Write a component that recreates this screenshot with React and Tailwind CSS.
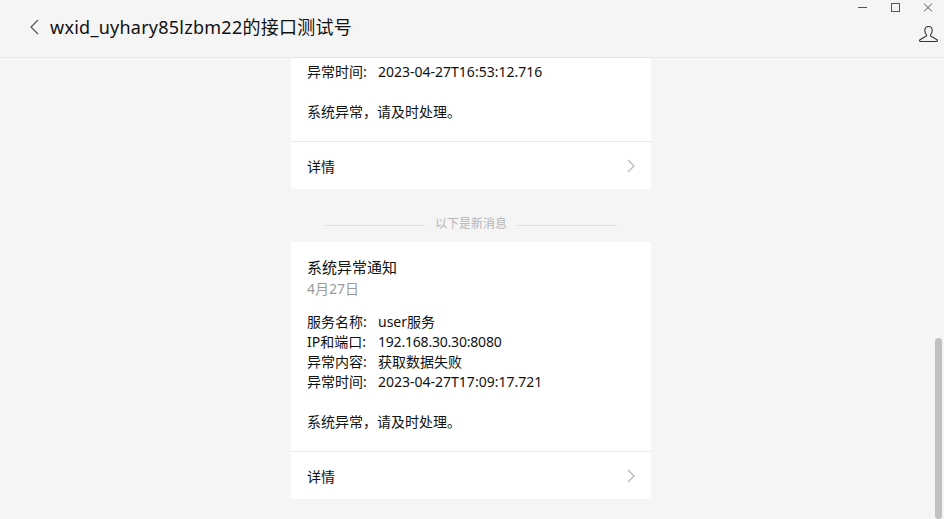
const font = { fontFamily: '"Noto Sans", "Noto Sans CJK SC", sans-serif' };

function Row({ label, value, valueClass = "" }) {
  return (
    <div className="flex h-5 items-center">
      <span className="w-[71px] shrink-0">{label}</span>
      <span className={valueClass}>{value}</span>
    </div>
  );
}

function Detail() {
  return (
    <div className="flex h-[48px] items-center justify-between border-t border-[#e7e7e7] pl-4 pr-[15px]">
      <span className="mt-[1px]">详情</span>
      <svg width="10" height="14" viewBox="0 0 10 14" fill="none" stroke="#b8b8b8" strokeWidth="1.3" className="mt-[1px]">
        <path d="M2 1l6 6-6 6" />
      </svg>
    </div>
  );
}

function Tail() {
  return (
    <>
      <div className="h-5" />
      <div className="flex h-5 items-center">系统异常，请及时处理。</div>
    </>
  );
}

export default function App() {
  return (
    <div className="relative flex h-[519px] w-[944px] flex-col overflow-hidden bg-[#f5f5f5] text-[14px] text-[#111]" style={font}>
      <header className="flex h-[58px] shrink-0 items-center border-b border-[#e7e7e7] pb-[4px] pl-[28px]">
        <svg width="12" height="16" viewBox="0 0 12 16" fill="none" stroke="#555" strokeWidth="1.2">
          <path d="M10 1L3 8l7 7" />
        </svg>
        <h1 className="ml-[10px] text-[18px] font-normal leading-6 tracking-[0.25px] text-[#111]">wxid_uyhary85lzbm22的接口测试号</h1>
      </header>

      <svg className="absolute left-[858px] top-[2px]" width="80" height="12" viewBox="0 0 80 12" fill="none" stroke="#555" strokeWidth="1">
        <path d="M0 5.500h9" />
        <rect x="33.5" y="1.5" width="8" height="8" />
        <path d="M66 1.500l8 8M74 1.500l-8 8" />
      </svg>
      <svg className="absolute left-[919px] top-[25px]" width="19" height="19" viewBox="0 0 19 19" fill="none" stroke="#333" strokeWidth="1.1">
        <path d="M9.500 1.500c-2.400 0-3.700 1.800-3.700 4 0 1.700.7 3 1.500 4 .4.6.2 1.400-.4 1.800L1 14.800c-.7.5-.5 1.700.5 1.700h16c1 0 1.200-1.200.5-1.700l-5.900-3.500c-.6-.4-.8-1.200-.4-1.800.8-1 1.500-2.300 1.500-4 0-2.200-1.300-4-3.700-4z" />
      </svg>

      <main className="flex flex-1 flex-col items-center overflow-hidden pr-[2px]">
        <section className="w-[360px] rounded-b-[3px] bg-white">
          <div className="px-4 pt-[3px] pb-[20px]">
            <Row label="异常时间:" value="2023-04-27T16:53:12.716" />
            <Tail />
          </div>
          <Detail />
        </section>

        <div className="mt-[26px] mb-[9px] flex h-[18px] w-[292px] items-center gap-[10px] text-[12px] text-[#b5b5b5]">
          <span className="mt-[3px] h-px flex-1 bg-[#dedede]" />
          <span>以下是新消息</span>
          <span className="mt-[3px] h-px flex-1 bg-[#dedede]" />
        </div>

        <section className="w-[360px] rounded-[3px] bg-white">
          <div className="px-4 pt-[15px] pb-[20px]">
            <div className="flex h-5 items-center text-[15px]">系统异常通知</div>
            <div className="mt-[1px] mb-[13px] flex h-5 items-center text-[#9c9c9c]">4月27日</div>
            <Row label="服务名称:" value="user服务" />
            <Row label="IP和端口:" value="192.168.30.30:8080" valueClass="tracking-[-0.2px]" />
            <Row label="异常内容:" value="获取数据失败" />
            <Row label="异常时间:" value="2023-04-27T17:09:17.721" />
            <Tail />
          </div>
          <Detail />
        </section>
      </main>

      <div className="absolute left-[935px] top-[338px] h-[181px] w-[7px] rounded-full bg-[#c1c1c1]" />
    </div>
  );
}
